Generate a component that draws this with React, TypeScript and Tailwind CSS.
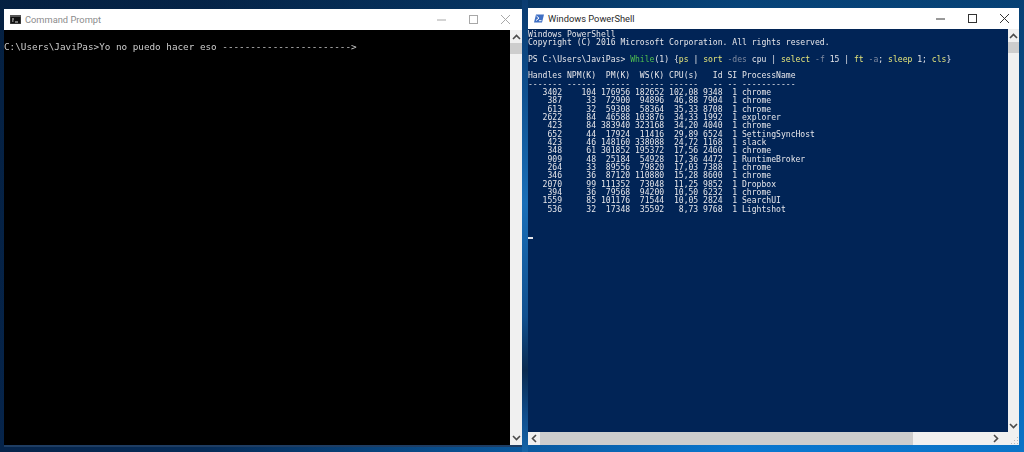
const rows = [
  "   3402    104 176956 182652 102,08 9348  1 chrome",
  "    387     33  72900  94896  46,88 7904  1 chrome",
  "    613     32  59308  58364  35,33 8708  1 chrome",
  "   2622     84  46588 103876  34,33 1992  1 explorer",
  "    423     84 383940 323168  34,20 4040  1 chrome",
  "    652     44  17924  11416  29,89 6524  1 SettingSyncHost",
  "    423     46 148160 338088  24,72 1168  1 slack",
  "    348     61 301852 195372  17,56 2460  1 chrome",
  "    909     48  25184  54928  17,36 4472  1 RuntimeBroker",
  "    264     33  89556  79820  17,03 7388  1 chrome",
  "    346     36  87120 110880  15,28 8600  1 chrome",
  "   2070     99 111352  73048  11,25 9852  1 Dropbox",
  "    394     36  79568  94200  10,50 6232  1 chrome",
  "   1559     85 101176  71544  10,05 2824  1 SearchUI",
  "    536     32  17348  35592   8,73 9768  1 Lightshot",
];

function Chevron({ d }: { d: string }) {
  return (
    <svg width="11" height="11" viewBox="0 0 11 11" className="block">
      <path d={d} fill="none" stroke="#4a4a4a" strokeWidth="1.6" />
    </svg>
  );
}

function Controls({ color, big }: { color: string; big?: boolean }) {
  return (
    <div className={big ? "flex items-center gap-[21px] pr-[9px]" : "flex items-center gap-[21px] pr-[11px]"}>
      <svg width="11" height="11" viewBox="0 0 11 11"><path d="M1 6h9" stroke={color} strokeWidth="1" /></svg>
      <svg width="11" height="11" viewBox="0 0 11 11"><rect x="1.5" y="1.5" width="8" height="8" fill="none" stroke={color} strokeWidth="1" /></svg>
      <svg width="11" height="11" viewBox="0 0 11 11"><path d="M1 1l9 9M10 1l-9 9" stroke={color} strokeWidth="1" /></svg>
    </div>
  );
}

export default function App() {
  return (
    <div className="w-[1024px] h-[452px] overflow-hidden flex items-start pt-[9px] pl-[4px] bg-[linear-gradient(180deg,rgba(4,30,60,0.6)_0%,rgba(4,30,60,0.35)_50%,rgba(4,30,60,0)_100%),linear-gradient(90deg,#06244a_0%,#062c58_20%,#0a5aa0_52%,#0a78d0_72%,#0a74c8_100%)]">
      {/* Command Prompt */}
      <div className="w-[518px] h-[438px] shrink-0 flex flex-col bg-[#f0f0f0] border-b-2 border-[#1e3d63]">
        <div className="h-[21px] shrink-0 bg-white flex items-center justify-between pl-[6px]">
          <div className="flex items-center gap-[4px]">
            <svg width="11" height="9" viewBox="0 0 11 9" className="block">
              <rect width="11" height="9" fill="#555555" />
              <rect x="0.5" y="2" width="10" height="6.5" fill="#111111" />
              <path d="M2 4h2M2 6h1.5M5 7h3" stroke="#e0e0e0" strokeWidth="1" />
            </svg>
            <span className="text-[9.3px] leading-none text-[#8c8c8c] font-['Roboto',sans-serif]">Command Prompt</span>
          </div>
          <Controls color="#a8a8a8" />
        </div>
        <div className="flex-1 flex min-h-0">
          <div className="flex-1 bg-black pt-[11px] text-[9.3px] leading-[11px] text-[#cccccc] font-['DejaVu_Sans_Mono',monospace] whitespace-pre blur-[0.3px]">
            {"C:\\Users\\JaviPas>Yo no puedo hacer eso ----------------------->"}
          </div>
          <div className="w-[12px] flex flex-col items-center justify-between bg-[#f0f0f0] py-[2px]">
            <div className="w-full flex flex-col">
              <div className="h-[11px] flex justify-center"><Chevron d="M2 7l3.5-3.5L9 7" /></div>
              <div className="h-[11px] bg-[#cdcdcd]" />
            </div>
            <Chevron d="M2 4l3.5 3.5L9 4" />
          </div>
        </div>
      </div>

      {/* Wallpaper seen between the two windows */}
      <div className="w-[6px] h-[452px] shrink-0 -mt-[9px] bg-[linear-gradient(180deg,#0b3c70_0%,#0d4a86_15%,#1a6fb8_45%,#11508f_70%,#0a2a50_82%,#0f4d8c_92%,#1465a8_100%)]" />

      {/* PowerShell */}
      <div className="w-[491px] h-[437px] shrink-0 -mt-px flex flex-col bg-[#f0f0f0]">
        <div className="h-[21px] shrink-0 bg-white flex items-center justify-between pl-[6px]">
          <div className="flex items-center gap-[4px]">
            <svg width="10" height="9" viewBox="0 0 10 9" className="block">
              <path d="M2 0.5h8L8 8.5H0z" fill="#3f6fc4" />
              <path d="M2.5 2L5 4.2L2 6.5M5 6.7h2.5" fill="none" stroke="#fff" strokeWidth="1" />
            </svg>
            <span className="text-[9.3px] leading-none text-[#2a2a2a] font-['Roboto',sans-serif]">Windows PowerShell</span>
          </div>
          <Controls color="#333333" big />
        </div>
        <div className="flex-1 flex min-h-0">
          <div className="flex-1 bg-[#012456] pt-[0.5px] text-[8.09px] leading-[8.35px] text-[#e6e6ea] font-['DejaVu_Sans_Mono',monospace] whitespace-pre overflow-hidden">
            <div className="blur-[0.3px]">
              <div>Windows PowerShell</div>
              <div>Copyright (C) 2016 Microsoft Corporation. All rights reserved.</div>
              <div>&nbsp;</div>
              <div>
                PS C:\Users\JaviPas&gt; <span className="text-[#4fc04f]">While</span>(1) {"{"}
                <span className="text-[#e6e67a]">ps</span> | <span className="text-[#e6e67a]">sort</span>{" "}
                <span className="text-[#7f8aa0]">-des</span> cpu | <span className="text-[#e6e67a]">select</span>{" "}
                <span className="text-[#7f8aa0]">-f</span> 15 | <span className="text-[#e6e67a]">ft</span>{" "}
                <span className="text-[#7f8aa0]">-a</span>; <span className="text-[#e6e67a]">sleep</span> 1;{" "}
                <span className="text-[#e6e67a]">cls</span>{"}"}
              </div>
              <div>&nbsp;</div>
              <div>Handles NPM(K)  PM(K)  WS(K) CPU(s)   Id SI ProcessName</div>
              <div>------- ------  -----  ----- ------   -- -- -----------</div>
              {rows.map((r, i) => (
                <div key={i}>{r}</div>
              ))}
            </div>
            <div>&nbsp;</div>
            <div>&nbsp;</div>
            <div className="w-[5px] h-[2px] mt-[7px] bg-[#e6e6ea]" />
          </div>
          <div className="w-[11px] flex flex-col items-center justify-between bg-[#f0f0f0] pt-[2px] pb-[1px]">
            <div className="w-full flex flex-col">
              <div className="h-[11px] flex justify-center"><Chevron d="M2 7l3.5-3.5L9 7" /></div>
              <div className="h-[11px] bg-[#cdcdcd]" />
            </div>
            <Chevron d="M2 4l3.5 3.5L9 4" />
          </div>
        </div>
        <div className="h-[13px] shrink-0 flex items-center bg-[#f0f0f0]">
          <div className="w-[12px] h-full flex items-center justify-center"><Chevron d="M7 2L3.5 5.5L7 9" /></div>
          <div className="w-[373px] h-full bg-[#cdcdcd]" />
          <div className="flex-1 h-full flex items-center justify-end pr-[1px]"><Chevron d="M4 2l3.5 3.5L4 9" /></div>
          <div className="w-[17px] h-full flex items-end justify-end">
            <svg width="9" height="9" viewBox="0 0 9 9" className="block">
              <path d="M7 1h1v1H7zM4 4h1v1H4zM7 4h1v1H7zM1 7h1v1H1zM4 7h1v1H4zM7 7h1v1H7z" fill="#b8b8b8" />
            </svg>
          </div>
        </div>
      </div>
    </div>
  );
}
